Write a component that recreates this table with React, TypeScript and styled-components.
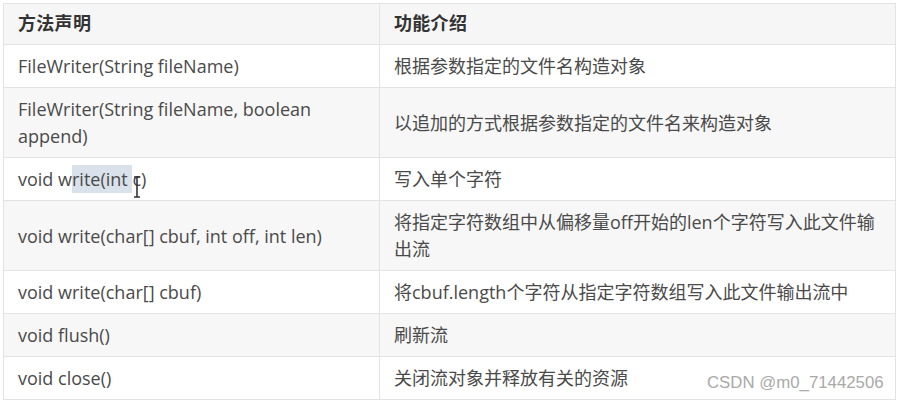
import React from 'react';
import styled, { createGlobalStyle } from 'styled-components';

const Global = createGlobalStyle`
  html, body {
    margin: 0;
    padding: 0;
    background: #fff;
  }
  body {
    font-family: 'Open Sans', 'Noto Sans CJK SC', sans-serif;
  }
`;

const Page = styled.div`
  position: relative;
  padding: 3px 3px 0 3px;
  width: 893px;
`;

const Table = styled.table`
  width: 893px;
  border-collapse: collapse;
  table-layout: fixed;
  font-size: 18px;
  line-height: 27px;
  color: #4a4a4a;
`;

const HeadCell = styled.th`
  text-align: left;
  font-weight: 700;
  color: #333;
  background: #f6f6f6;
  border: 1px solid #e3e3e3;
  padding: 6px 14px 7px 14px;
  letter-spacing: 0.3px;
`;

const Row = styled.tr<{ $shade: boolean }>`
  background: ${p => (p.$shade ? '#f7f7f7' : '#fff')};
`;

const Cell = styled.td<{ $first?: boolean }>`
  border: 1px solid #e3e3e3;
  padding: ${p => (p.$first ? '8px 14px 7px 14px' : '8px 14px 7px 14px')};
  vertical-align: middle;
  word-break: break-word;
`;

const Mark = styled.span`
  background: #d9e2eb;
  padding: 2px 0;
`;

const Caret = styled.span`
  position: relative;
  display: inline-block;
`;

const Beam = styled.svg`
  position: absolute;
  left: 1px;
  top: 10px;
`;

const Watermark = styled.div`
  position: absolute;
  left: 707px;
  top: 373px;
  font-family: 'Liberation Sans', Arial, sans-serif;
  font-size: 16.8px;
  color: #a9a9a9;
  letter-spacing: 0;
  pointer-events: none;
`;

type Item = { method: React.ReactNode; desc: React.ReactNode };

const rows: Item[] = [
  { method: 'FileWriter(String fileName)', desc: '根据参数指定的文件名构造对象' },
  { method: 'FileWriter(String fileName, boolean append)', desc: '以追加的方式根据参数指定的文件名来构造对象' },
  {
    method: (
      <>
        void w<Mark>rite(int </Mark>
        <Caret>
          c
          <Beam width="8" height="22" viewBox="0 0 8 22">
            <path d="M1 1h6M4 1v20M1 21h6" stroke="#333" strokeWidth="1.6" fill="none" />
          </Beam>
        </Caret>
        )
      </>
    ),
    desc: '写入单个字符',
  },
  { method: 'void write(char[] cbuf, int off, int len)', desc: '将指定字符数组中从偏移量off开始的len个字符写入此文件输出流' },
  { method: 'void write(char[] cbuf)', desc: '将cbuf.length个字符从指定字符数组写入此文件输出流中' },
  { method: 'void flush()', desc: '刷新流' },
  { method: 'void close()', desc: '关闭流对象并释放有关的资源' },
];

export default function App() {
  return (
    <Page>
      <Global />
      <Table>
        <colgroup>
          <col style={{ width: 376 }} />
          <col />
        </colgroup>
        <thead>
          <tr>
            <HeadCell>方法声明</HeadCell>
            <HeadCell>功能介绍</HeadCell>
          </tr>
        </thead>
        <tbody>
          {rows.map((r, i) => (
            <Row key={i} $shade={i % 2 === 1}>
              <Cell $first>{r.method}</Cell>
              <Cell>{r.desc}</Cell>
            </Row>
          ))}
        </tbody>
      </Table>
      <Watermark>CSDN @m0_71442506</Watermark>
    </Page>
  );
}
